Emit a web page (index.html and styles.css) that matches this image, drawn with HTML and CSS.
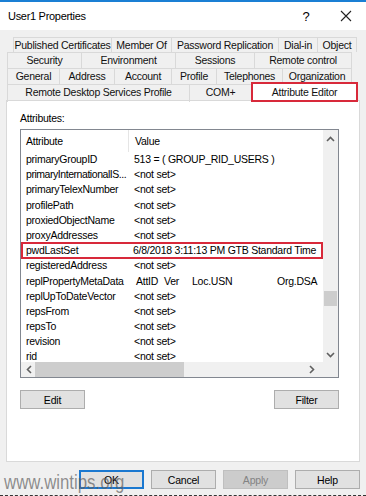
FILE: index.html
```
<!DOCTYPE html>
<html>
<head>
    <title>User1 Properties</title>
    <link rel="stylesheet" href="styles.css">
</head>
<body>
<div class="window">
    <div class="titlebar">
        <span class="title">User1 Properties</span>
        <span class="help">?</span>
        <span class="close">
            <svg width="12" height="12" viewBox="0 0 12 12"><path d="M1 1L11 11M11 1L1 11" stroke="#222" stroke-width="1.1" fill="none"/></svg>
        </span>
    </div>

    <div class="dialog">
        <div class="tabs">
            <div class="tab-row row1">
                <div class="tab">Published Certificates</div>
                <div class="tab">Member Of</div>
                <div class="tab">Password Replication</div>
                <div class="tab">Dial-in</div>
                <div class="tab">Object</div>
            </div>
            <div class="tab-row row2">
                <div class="tab">Security</div>
                <div class="tab">Environment</div>
                <div class="tab">Sessions</div>
                <div class="tab">Remote control</div>
            </div>
            <div class="tab-row row3">
                <div class="tab">General</div>
                <div class="tab">Address</div>
                <div class="tab">Account</div>
                <div class="tab">Profile</div>
                <div class="tab">Telephones</div>
                <div class="tab">Organization</div>
            </div>
            <div class="tab-row row4">
                <div class="tab">Remote Desktop Services Profile</div>
                <div class="tab">COM+</div>
                <div class="tab active">Attribute Editor</div>
            </div>
        </div>

        <div class="panel">
            <div class="label">Attributes:</div>
            <div class="listbox">
                <div class="list-main">
                    <div class="list-body">
                        <div class="list-head">
                            <span class="col-attr">Attribute</span>
                            <span class="col-val">Value</span>
                        </div>
                        <div class="row"><span class="col-attr">primaryGroupID</span><span class="col-val">513 = ( GROUP_RID_USERS )</span></div>
                        <div class="row"><span class="col-attr tight">primaryInternationalIS...</span><span class="col-val">&lt;not set&gt;</span></div>
                        <div class="row"><span class="col-attr">primaryTelexNumber</span><span class="col-val">&lt;not set&gt;</span></div>
                        <div class="row"><span class="col-attr">profilePath</span><span class="col-val">&lt;not set&gt;</span></div>
                        <div class="row"><span class="col-attr">proxiedObjectName</span><span class="col-val">&lt;not set&gt;</span></div>
                        <div class="row"><span class="col-attr">proxyAddresses</span><span class="col-val">&lt;not set&gt;</span></div>
                        <div class="row marked"><span class="col-attr">pwdLastSet</span><span class="col-val">6/8/2018 3:11:13 PM GTB Standard Time</span></div>
                        <div class="row"><span class="col-attr">registeredAddress</span><span class="col-val">&lt;not set&gt;</span></div>
                        <div class="row"><span class="col-attr">replPropertyMetaData</span><span class="col-val meta"><span class="m1">AttID</span><span class="m2">Ver</span><span class="m3">Loc.USN</span><span>Org.DSA</span></span></div>
                        <div class="row"><span class="col-attr">replUpToDateVector</span><span class="col-val">&lt;not set&gt;</span></div>
                        <div class="row"><span class="col-attr">repsFrom</span><span class="col-val">&lt;not set&gt;</span></div>
                        <div class="row"><span class="col-attr">repsTo</span><span class="col-val">&lt;not set&gt;</span></div>
                        <div class="row"><span class="col-attr">revision</span><span class="col-val">&lt;not set&gt;</span></div>
                        <div class="row"><span class="col-attr">rid</span><span class="col-val">&lt;not set&gt;</span></div>
                    </div>
                    <div class="vscroll">
                        <svg class="arrow" width="9" height="6" viewBox="0 0 9 6"><path d="M1 5L4.5 1.5L8 5" stroke="#606060" stroke-width="1.6" fill="none"/></svg>
                        <div class="vtrack"><div class="vthumb"></div></div>
                        <svg class="arrow" width="9" height="6" viewBox="0 0 9 6"><path d="M1 1L4.5 4.5L8 1" stroke="#606060" stroke-width="1.6" fill="none"/></svg>
                    </div>
                </div>
                <div class="hscroll">
                    <svg class="arrow" width="6" height="9" viewBox="0 0 6 9"><path d="M5 1L1.5 4.5L5 8" stroke="#606060" stroke-width="1.6" fill="none"/></svg>
                    <div class="htrack"><div class="hthumb"></div></div>
                    <svg class="arrow" width="6" height="9" viewBox="0 0 6 9"><path d="M1 1L4.5 4.5L1 8" stroke="#606060" stroke-width="1.6" fill="none"/></svg>
                    <div class="corner"></div>
                </div>
            </div>
            <div class="panel-buttons">
                <button class="btn">Edit</button>
                <button class="btn">Filter</button>
            </div>
        </div>

        <div class="dialog-buttons">
            <button class="btn default">OK</button>
            <button class="btn">Cancel</button>
            <button class="btn disabled">Apply</button>
            <button class="btn">Help</button>
        </div>
    </div>

    <div class="watermark">www.wintips.org</div>
</div>
</body>
</html>
```

FILE: styles.css
```
html, body {
    margin: 0;
    padding: 0;
}
body {
    font-family: "Liberation Sans", Arial, sans-serif;
    font-size: 10.5px;
    letter-spacing: -0.25px;
    color: #000;
    background: #f0f0f0;
}
.window {
    position: relative;
    width: 366px;
    height: 496px;
    overflow: hidden;
    border-top: 2px solid #1a7fd4;
    box-sizing: border-box;
    border-bottom: 1px dashed #333;
}
.titlebar {
    height: 28px;
    background: #fff;
    display: flex;
    align-items: center;
    padding-left: 8px;
}
.title {
    font-size: 11px;
    letter-spacing: -0.3px;
    flex: 1;
}
.help {
    font-size: 13px;
    width: 40px;
    text-align: center;
}
.close {
    width: 40px;
    display: flex;
    justify-content: center;
}
.dialog {
    padding: 7px 6px 0 6px;
}

/* tabs */
.tab-row {
    display: grid;
    height: 15px;
}
.row1 { grid-template-columns: 98px 60px 107px 39px 39px; margin-left: 8px; }
.row2 { grid-template-columns: 74px 94px 79px 97px; margin-left: 2px; height: 16px; }
.row3 { grid-template-columns: 52px 55px 57px 45px 66px 69px; margin-left: 2px; height: 16px; }
.row4 { grid-template-columns: 182px 62px 106px; margin-left: 2px; height: 16px; }
.tab {
    border: 1px solid #d9d9d9;
    border-bottom: none;
    margin-left: -1px;
    text-align: center;
    line-height: 14px;
    white-space: nowrap;
    overflow: hidden;
    color: #111;
}
.row4 .tab {
    line-height: 15px;
}
.tab.active {
    background: #fff;
    border: 2px solid #d8293a;
    margin-top: -2px;
    height: 20px;
    box-sizing: border-box;
    line-height: 16px;
    position: relative;
    z-index: 1;
}

/* panel */
.panel {
    background: #fff;
    border: 1px solid #d9d9d9;
    height: 362px;
    box-sizing: border-box;
    padding: 11px 20px 0 13px;
}
.label {
    height: 17px;
}
.listbox {
    border: 1px solid #828790;
    width: 319px;
    box-sizing: border-box;
    height: 249px;
    display: flex;
    flex-direction: column;
}
.list-main {
    flex: 1;
    display: flex;
    overflow: hidden;
}
.list-body {
    flex: 1;
    overflow: hidden;
}
.list-head {
    display: flex;
    height: 22px;
    align-items: center;
}
.list-head .col-attr {
    border-right: 1px solid #e5e5e5;
    height: 22px;
    line-height: 22px;
}
.row {
    display: flex;
    height: 15.2px;
    line-height: 15px;
    white-space: nowrap;
}
.col-attr {
    width: 102px;
    padding-left: 5px;
    flex: none;
    overflow: hidden;
}
.col-attr.tight {
    letter-spacing: -0.45px;
}
.col-val {
    padding-left: 6px;
}
.marked {
    outline: 2px solid #d8293a;
    outline-offset: -1px;
    margin-left: 1px;
    width: 300px;
}
.marked .col-attr {
    width: 101px;
    padding-left: 4px;
}
.meta {
    display: flex;
    padding-left: 8px;
}
.m1 { width: 28px; }
.m2 { width: 28px; }
.m3 { width: 85px; }

/* scrollbars */
.vscroll {
    width: 15px;
    background: #f0f0f0;
    display: flex;
    flex-direction: column;
    align-items: center;
    padding: 6px 0 4px;
    box-sizing: border-box;
}
.vtrack {
    flex: 1;
    width: 100%;
}
.vthumb {
    margin-top: 149px;
    margin-left: 1px;
    width: 13px;
    height: 15px;
    background: #cdcdcd;
}
.hscroll {
    height: 15px;
    display: flex;
    align-items: center;
    background: #f0f0f0;
    padding-left: 5px;
}
.htrack {
    flex: 1;
    height: 100%;
    padding: 0 5px 0 3px;
}
.hthumb {
    width: 149px;
    height: 100%;
    background: #cdcdcd;
}
.corner {
    width: 15px;
    height: 100%;
    margin-left: 8px;
}

/* buttons */
.btn {
    font-family: "Liberation Sans", Arial, sans-serif;
    font-size: 10.5px;
    letter-spacing: -0.2px;
    width: 65px;
    height: 19px;
    background: #e1e1e1;
    border: 1px solid #adadad;
    padding: 0;
    color: #000;
}
.panel-buttons {
    display: flex;
    justify-content: space-between;
    width: 319px;
    margin-top: 12px;
}
.dialog-buttons {
    display: flex;
    justify-content: flex-end;
    gap: 7px;
    padding-top: 8px;
}
.btn.default {
    border: 2px solid #1a78d0;
}
.btn.disabled {
    background: #cccccc;
    border-color: #bfbfbf;
    color: #838383;
}
.watermark {
    position: absolute;
    left: 4px;
    bottom: 1px;
    font-family: "Liberation Sans", Arial, sans-serif;
    font-size: 21px;
    letter-spacing: 0;
    color: rgba(95, 95, 95, 0.7);
    transform: scaleX(0.8);
    transform-origin: left bottom;
}
```
